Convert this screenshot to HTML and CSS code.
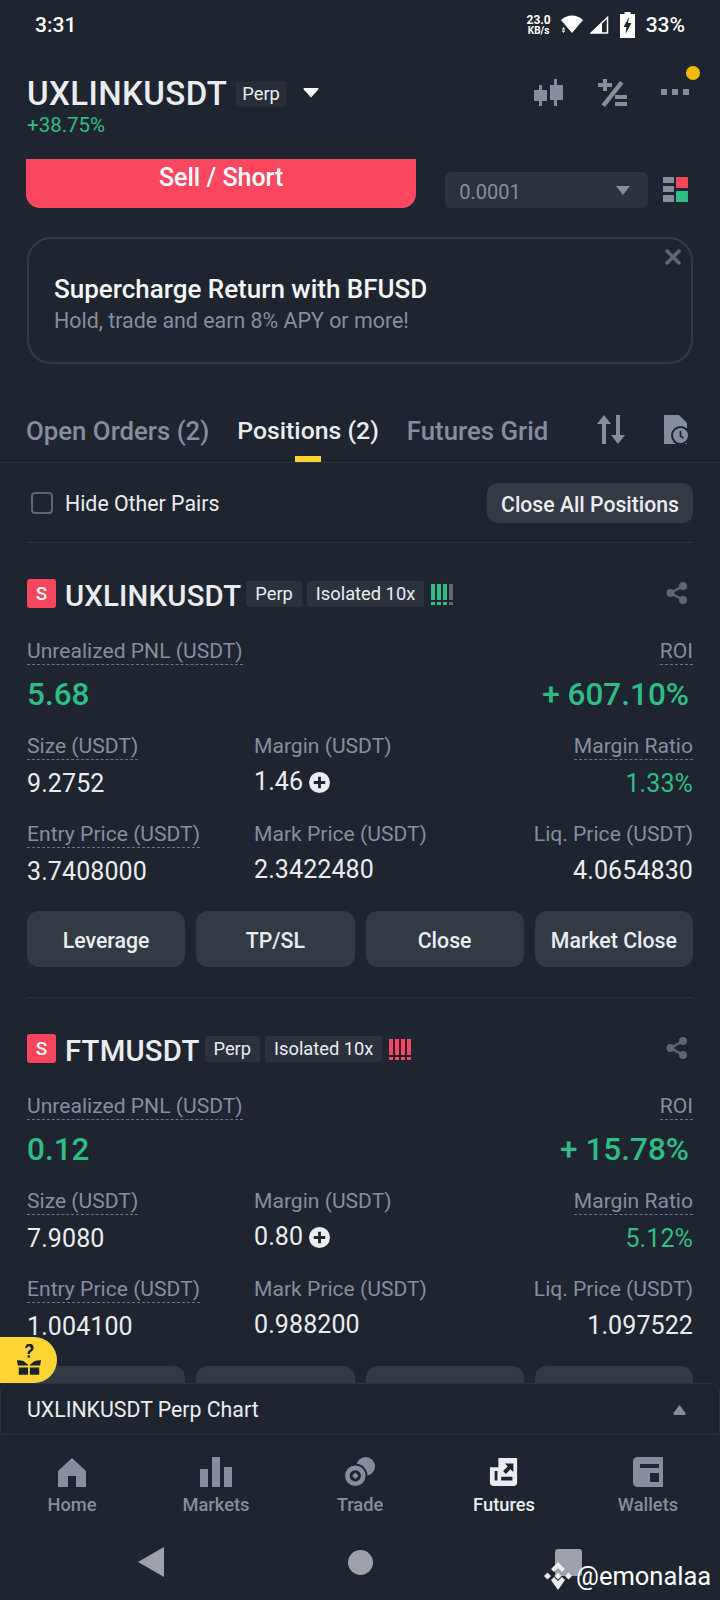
FILE: index.html
```html
<!doctype html>
<html lang="en">
<head>
  <meta charset="UTF-8" />
  <meta name="viewport" content="width=device-width, initial-scale=1.0" />
  <title>UXLINKUSDT Perp - Positions</title>
  <link rel="stylesheet" href="styles.css">
</head>
<body>
  <div class="screen">
    <div class="status-bar">
      <span class="status-time">3:31</span>
      <div class="status-right">
        <span class="net-speed"><b>23.0</b><b class="net-unit">KB/s</b></span>
        <svg class="wifi" width="22" height="20" viewBox="0 0 22 20"><path d="M0 5C6-1 16-1 22 5L11 18z" fill="#fff"/><path d="M1 13.500l3 3.500H1zM1 18h3l-1.500 2z" fill="#1e2530"/><path d="M2.500 12l1.800 2.500H.7zM.7 15.500h3.600l-1.800 2.500z" fill="#fff"/></svg>
        <svg class="signal" width="19" height="18" viewBox="0 0 19 18"><path d="M17.500 1.500V17H1z" fill="none" stroke="#fff" stroke-width="1.500"/><path d="M1 17L12 6.500V17z" fill="#fff"/></svg>
        <svg class="battery" width="15" height="26" viewBox="0 0 15 26"><path d="M4.500 0h6v2H15v24H0V2h4.500z" fill="#fff"/><path d="M9 5L3.500 15h3l-1 7 6-11H8z" fill="#1e2530"/></svg>
        <span class="status-pct">33%</span>
      </div>
    </div>

    <header class="top-bar">
      <div class="pair">
        <div class="pair-line">
          <h1>UXLINKUSDT</h1>
          <span class="tag tag-top">Perp</span>
          <svg class="pair-caret" width="16" height="11" viewBox="0 0 16 11"><path d="M1.500 1h13a1 1 0 0 1 .8 1.500L8 10.500.7 2.500A1 1 0 0 1 1.500 1z" fill="#fff"/></svg>
        </div>
        <div class="pair-change">+38.75%</div>
      </div>
      <div class="top-icons">
        <svg width="32" height="30" viewBox="0 0 32 30" fill="#848e9c"><path d="M6 7h3v5h5v11H9v5H6v-5H1V12h5z"/><path d="M21 1h3v6h6v15h-6v6h-3v-6h-4V7h4z"/></svg>
        <svg width="30" height="30" viewBox="0 0 30 30" fill="#848e9c"><path d="M5 1h4v4h5v4H9v4H5V9H0V5h5z"/><path d="M22 3l3.500 2.500L7 29l-3.500-2.500z"/><path d="M17 17h12v4H17zM17 24h12v4H17z"/></svg>
        <div class="more">
          <svg width="28" height="6" viewBox="0 0 28 6" fill="#848e9c"><path d="M0 0h6v6H0zM11 0h6v6h-6zM22 0h6v6h-6z"/></svg>
          <span class="more-dot"></span>
        </div>
      </div>
    </header>

    <div class="order-row">
      <button class="sell-btn">Sell / Short</button>
      <div class="depth-select">
        <span>0.0001</span>
        <svg width="14" height="9" viewBox="0 0 14 9"><path d="M0 0h14L7 9z" fill="#848e9c"/></svg>
      </div>
      <svg class="book-icon" width="25" height="25" viewBox="0 0 25 25"><path d="M0 0h11v6H0zM0 9h11v6H0zM0 18h11v7H0z" fill="#848e9c"/><path d="M13 0h12v11H13z" fill="#f6465d"/><path d="M13 14h12v11H13z" fill="#2ebd85"/></svg>
    </div>

    <div class="banner">
      <svg class="banner-close" width="18" height="18" viewBox="0 0 18 18"><path d="M2 2l14 14M16 2L2 16" stroke="#5e6673" stroke-width="3.500"/></svg>
      <div class="banner-title">Supercharge Return with BFUSD</div>
      <div class="banner-sub">Hold, trade and earn 8% APY or more!</div>
    </div>

    <nav class="tabs">
      <a class="tab">Open Orders (2)</a>
      <a class="tab tab-active">Positions (2)</a>
      <a class="tab">Futures Grid</a>
      <div class="tab-icons">
        <svg width="28" height="29" viewBox="0 0 28 29" fill="#848e9c"><path d="M7 0l7 9H9v20H5V9H0z"/><path d="M19 0h4v20h5l-7 9-7-9h5z"/></svg>
        <svg width="26" height="29" viewBox="0 0 26 29"><path d="M0 0h15l8 8v21H0z" fill="#848e9c"/><circle cx="16.500" cy="20.500" r="9.500" fill="#1e2530"/><circle cx="16.500" cy="20.500" r="7.500" fill="#848e9c"/><path d="M16.500 16v5l3 2" stroke="#1e2530" stroke-width="1.800" fill="none"/></svg>
      </div>
    </nav>

    <div class="filter-row">
      <label class="hide-pairs"><span class="checkbox"></span><span class="hide-text">Hide Other Pairs</span></label>
      <button class="close-all">Close All Positions</button>
    </div>

    <main class="positions">
      <section class="position">
        <div class="position-head">
          <span class="side-badge">S</span>
          <span class="position-name">UXLINKUSDT</span>
          <span class="tag">Perp</span>
          <span class="tag">Isolated 10x</span>
          <span class="risk">
            <i class="risk-green"></i><i class="risk-green"></i><i class="risk-green"></i><i class="risk-grey"></i>
          </span>
          <svg class="share" width="22" height="22" viewBox="0 0 22 22" fill="#5e6673"><circle cx="17" cy="4" r="4"/><circle cx="4.500" cy="11" r="4"/><circle cx="17" cy="18" r="4"/><path d="M4.500 11L17 4M4.500 11L17 18" stroke="#5e6673" stroke-width="2.500"/></svg>
        </div>
        <div class="pnl-row">
          <div>
            <span class="label dotted">Unrealized PNL (USDT)</span>
            <div class="pnl-value">5.68</div>
          </div>
          <div class="align-right">
            <span class="label dotted">ROI</span>
            <div class="pnl-value roi">+ 607.10%</div>
          </div>
        </div>
        <div class="stat-grid">
          <div><span class="label dotted">Size (USDT)</span><div class="value">9.2752</div></div>
          <div><span class="label">Margin (USDT)</span><div class="value">1.46 <svg class="plus" width="21" height="21" viewBox="0 0 22 22"><circle cx="11" cy="11" r="11" fill="#eaecef"/><path d="M11 5v12M5 11h12" stroke="#1e2530" stroke-width="3"/></svg></div></div>
          <div class="align-right"><span class="label dotted">Margin Ratio</span><div class="value value-green">1.33%</div></div>
          <div><span class="label dotted">Entry Price (USDT)</span><div class="value">3.7408000</div></div>
          <div><span class="label">Mark Price (USDT)</span><div class="value">2.3422480</div></div>
          <div class="align-right"><span class="label">Liq. Price (USDT)</span><div class="value">4.0654830</div></div>
        </div>
        <div class="actions">
          <button>Leverage</button>
          <button>TP/SL</button>
          <button>Close</button>
          <button>Market Close</button>
        </div>
      </section>

      <section class="position">
        <div class="position-head">
          <span class="side-badge">S</span>
          <span class="position-name">FTMUSDT</span>
          <span class="tag">Perp</span>
          <span class="tag">Isolated 10x</span>
          <span class="risk">
            <i class="risk-red"></i><i class="risk-red"></i><i class="risk-red"></i><i class="risk-red"></i>
          </span>
          <svg class="share" width="22" height="22" viewBox="0 0 22 22" fill="#5e6673"><circle cx="17" cy="4" r="4"/><circle cx="4.500" cy="11" r="4"/><circle cx="17" cy="18" r="4"/><path d="M4.500 11L17 4M4.500 11L17 18" stroke="#5e6673" stroke-width="2.500"/></svg>
        </div>
        <div class="pnl-row">
          <div>
            <span class="label dotted">Unrealized PNL (USDT)</span>
            <div class="pnl-value">0.12</div>
          </div>
          <div class="align-right">
            <span class="label dotted">ROI</span>
            <div class="pnl-value roi">+ 15.78%</div>
          </div>
        </div>
        <div class="stat-grid">
          <div><span class="label dotted">Size (USDT)</span><div class="value">7.9080</div></div>
          <div><span class="label">Margin (USDT)</span><div class="value">0.80 <svg class="plus" width="21" height="21" viewBox="0 0 22 22"><circle cx="11" cy="11" r="11" fill="#eaecef"/><path d="M11 5v12M5 11h12" stroke="#1e2530" stroke-width="3"/></svg></div></div>
          <div class="align-right"><span class="label dotted">Margin Ratio</span><div class="value value-green">5.12%</div></div>
          <div><span class="label dotted">Entry Price (USDT)</span><div class="value">1.004100</div></div>
          <div><span class="label">Mark Price (USDT)</span><div class="value">0.988200</div></div>
          <div class="align-right"><span class="label">Liq. Price (USDT)</span><div class="value">1.097522</div></div>
        </div>
        <div class="actions">
          <button></button>
          <button></button>
          <button></button>
          <button></button>
        </div>
      </section>
    </main>

    <div class="gift">
      <svg width="26" height="32" viewBox="0 0 28 34" fill="#1e2329"><path d="M10 4a4.500 4.500 0 1 1 7 3.500c-1.500 1-2 1.500-2 3h-2.500c0-2.500 1-3.500 2.500-4.500a2 2 0 1 0-3-2z"/><path d="M12.500 12h2.500v2.500h-2.500z"/><path d="M1 17l7 1 5 4v1H2zM27 17l-7 1-5 4v1h11z"/><path d="M3 25h10v8H3zM15 25h10v8H15z"/></svg>
    </div>

    <div class="chart-bar">
      <span>UXLINKUSDT Perp Chart</span>
      <svg width="13" height="10" viewBox="0 0 13 10"><path d="M6.500 0l6 8q.5 2-1 2h-10q-1.500 0-1-2z" fill="#848e9c"/></svg>
    </div>

    <nav class="tabbar">
      <a class="tabbar-item">
        <svg width="32" height="30" viewBox="0 0 32 30" fill="#848e9c"><path fill-rule="evenodd" d="M16 1l14 13v16H2V14zM12 19v11h8V19z"/></svg>
        <span>Home</span>
      </a>
      <a class="tabbar-item">
        <svg width="32" height="30" viewBox="0 0 32 30" fill="#848e9c"><path d="M0 12h8v18H0zM12 0h8v30h-8zM24 10h8v20h-8z"/></svg>
        <span>Markets</span>
      </a>
      <a class="tabbar-item">
        <svg width="30" height="30" viewBox="0 0 32 32"><circle cx="22" cy="10" r="10" fill="#848e9c"/><circle cx="11" cy="20" r="13" fill="#1e2530"/><circle cx="11" cy="20" r="11" fill="#848e9c"/><circle cx="11" cy="20" r="6" fill="#1e2530"/><path d="M11 16.500l3.500 3.500-3.500 3.500L7.500 20z" fill="#848e9c"/></svg>
        <span>Trade</span>
      </a>
      <a class="tabbar-item tabbar-active">
        <svg width="30" height="30" viewBox="0 0 30 32"><path fill="#eaecef" d="M9 1h20v26q0 4-4 4H4q-4 0-4-4V11h9z"/><path fill="#1e2530" d="M16 7h9v9l-3-3-5 5-3-3 5-5zM5 15h3v10H5zM12 21h12v4H12z"/></svg>
        <span>Futures</span>
      </a>
      <a class="tabbar-item">
        <svg width="30" height="30" viewBox="0 0 30 30"><path fill="#848e9c" d="M5 0h25v30H5q-5 0-5-5V5q0-5 5-5z"/><path fill="#1e2530" d="M7 7h19v4H7zM17 16h9v9h-9z"/></svg>
        <span>Wallets</span>
      </a>
    </nav>

    <div class="android-nav">
      <svg width="27" height="30" viewBox="0 0 27 30"><path d="M26 0v30L0 15z" fill="#9ea2a8"/></svg>
      <span class="android-home"></span>
      <span class="android-recent"></span>
    </div>

    <div class="watermark">
      <svg width="28" height="28" viewBox="0 0 28 28" fill="#eaecef"><path fill-rule="evenodd" d="M14 0l7 7-3 3-4-4-4 4-3-3zM3.500 10.500l3.500 3.500-3.500 3.500L0 14zM24.500 10.500L28 14l-3.500 3.500L21 14zM14 10.500l3.500 3.500-3.500 3.500-3.500-3.500zM7 18l3-3 4 4 4-4 3 3-7 10z"/></svg>
      <span>@emonalaa</span>
    </div>
  </div>
</body>
</html>
```

FILE: styles.css
```css
:root {
  --bg: #1e2530;
  --line: #2b323c;
  --btn: #323a45;
  --white: #eaecef;
  --grey: #848e9c;
  --green: #2ebd85;
  --red: #f6465d;
  --yellow: #fcd535;
}

* {
  box-sizing: border-box;
}

body {
  margin: 0;
  background-color: var(--bg);
  font-family: Roboto, "Noto Sans", sans-serif;
  color: var(--white);
}

button {
  font-family: inherit;
  border: none;
  color: var(--white);
}

.screen {
  position: relative;
  width: 720px;
  height: 1600px;
  overflow: hidden;
  display: flex;
  flex-direction: column;
  background-color: var(--bg);
}

/* status bar */
.status-bar {
  height: 50px;
  flex: none;
  display: flex;
  justify-content: space-between;
  align-items: center;
  padding: 0 35px;
  color: #fff;
}

.status-time {
  font-size: 21px;
  font-weight: 500;
}

.status-right {
  display: flex;
  align-items: center;
  gap: 7px;
}

.net-speed {
  display: flex;
  flex-direction: column;
  align-items: center;
  font-size: 12px;
  line-height: 11px;
  margin-right: 3px;
}

.net-unit {
  font-size: 10px;
  line-height: 10px;
}

.battery {
  margin-left: 4px;
}

.status-pct {
  font-size: 21px;
  font-weight: 500;
  margin-left: 4px;
}

/* pair header */
.top-bar {
  height: 89px;
  flex: none;
  display: flex;
  justify-content: space-between;
  padding: 27px 31px 0 27px;
}

.pair-line {
  display: flex;
  align-items: center;
  height: 34px;
}

.pair-line h1 {
  margin: 0;
  font-size: 33px;
  font-weight: 500;
  line-height: 34px;
  letter-spacing: 0.4px;
}

.pair-change {
  font-size: 20.500px;
  line-height: 24px;
  color: var(--green);
  margin-top: 2px;
}

.tag {
  flex: none;
  height: 26px;
  padding: 0 9px;
  border-radius: 3px;
  background-color: #2b323d;
  font-size: 18.300px;
  line-height: 26px;
  color: var(--white);
  margin-left: 5px;
}

.tag-top {
  margin-left: 9px;
  padding: 0 6px;
  background-color: #272e39;
}

.pair-caret {
  margin-left: 17px;
  margin-top: -4px;
}

.top-icons {
  display: flex;
  align-items: center;
  height: 34px;
  gap: 33px;
  margin-top: -1px;
}

.more {
  position: relative;
  margin-top: -2px;
  line-height: 0;
}

.more-dot {
  position: absolute;
  right: -11px;
  top: -23px;
  width: 14px;
  height: 14px;
  border-radius: 50%;
  background-color: #f0b90b;
}

/* order row */
.order-row {
  height: 49px;
  flex: none;
  display: flex;
  align-items: flex-end;
  padding: 0 32px 0 26px;
  margin-top: 20px;
}

.sell-btn {
  width: 391px;
  height: 49px;
  border-radius: 0 0 14px 14px;
  background-color: #fb4660;
  color: #fff;
  font-size: 25px;
  font-weight: 500;
  padding: 0 0 13px;
}

.depth-select {
  width: 203px;
  height: 36px;
  margin-left: 29px;
  padding: 3px 18px 0 14px;
  border-radius: 6px;
  background-color: #2b323d;
  color: var(--grey);
  font-size: 20px;
  display: flex;
  align-items: center;
  justify-content: space-between;
}

.depth-select svg {
  margin-top: -3px;
}

.book-icon {
  margin-left: 15px;
  margin-bottom: 6px;
}

/* banner */
.banner {
  position: relative;
  height: 127px;
  flex: none;
  margin: 29px 27px 0;
  padding: 34px 25px 0;
  border: 2px solid #333a45;
  border-radius: 24px;
}

.banner-close {
  position: absolute;
  right: 9px;
  top: 9px;
}

.banner-title {
  font-size: 26px;
  font-weight: 500;
  line-height: 32px;
  color: #f5f5f5;
}

.banner-sub {
  font-size: 21.400px;
  line-height: 26px;
  margin-top: 3px;
  color: var(--grey);
}

/* tabs */
.tabs {
  height: 99px;
  flex: none;
  display: flex;
  align-items: flex-start;
  padding: 50px 30px 0 26px;
  border-bottom: 1px solid var(--line);
}

.tab {
  position: relative;
  font-size: 25.800px;
  font-weight: 500;
  line-height: 34px;
  color: var(--grey);
  margin-right: 28px;
}

.tab-active {
  color: var(--white);
  font-size: 24.800px;
}

.tab-active::after {
  content: "";
  position: absolute;
  left: 50%;
  bottom: -14px;
  width: 26px;
  height: 6px;
  margin-left: -13px;
  background-color: var(--yellow);
}

.tab-icons {
  margin-left: auto;
  display: flex;
  gap: 39px;
  margin-top: 1px;
}

/* filter */
.filter-row {
  height: 80px;
  flex: none;
  margin: 0 27px;
  display: flex;
  align-items: center;
  justify-content: space-between;
  border-bottom: 1px solid var(--line);
}

.hide-pairs {
  display: flex;
  align-items: center;
  font-size: 21.300px;
  padding-left: 4px;
  line-height: 26px;
}

.hide-text {
  padding-top: 3px;
}

.checkbox {
  width: 22px;
  height: 22px;
  margin-right: 12px;
  border: 2px solid #5e6673;
  border-radius: 4px;
}

.close-all {
  height: 40px;
  width: 206px;
  padding: 3px 0 0;
  border-radius: 10px;
  background-color: var(--btn);
  font-size: 21.200px;
  font-weight: 500;
}

/* positions */
.positions {
  flex: 1;
  min-height: 0;
  overflow: hidden;
}

.position {
  height: 455px;
  margin: 0 27px;
  padding-top: 35px;
  border-bottom: 1px solid var(--line);
}

.position-head {
  display: flex;
  align-items: center;
  height: 30px;
}

.position-head .tag {
  margin-top: 2px;
}

.side-badge {
  flex: none;
  width: 29px;
  height: 29px;
  border-radius: 3px;
  background-color: var(--red);
  color: #fff;
  font-size: 19px;
  font-weight: 500;
  line-height: 29px;
  text-align: center;
}

.position-name {
  font-size: 29.300px;
  font-weight: 500;
  margin: 6px 0 0 9px;
  letter-spacing: 0.2px;
}

.share {
  margin-left: auto;
  margin-right: 5px;
}

.risk {
  display: flex;
  gap: 2px;
  margin: 2px 0 0 7px;
}

.risk i {
  display: block;
  width: 4px;
  height: 21px;
  background: linear-gradient(currentColor 16px, transparent 16px, transparent 18px, currentColor 18px);
}

.risk-green {
  color: var(--green);
}

.risk-red {
  color: var(--red);
}

.risk-grey {
  color: #5e6673;
}

.label {
  display: inline-block;
  font-size: 21.100px;
  line-height: 26px;
  color: var(--grey);
}

.dotted {
  border-bottom: 1px dashed #6a7380;
}

.pnl-row {
  display: flex;
  justify-content: space-between;
  margin-top: 30px;
}

.pnl-value {
  font-size: 31.500px;
  font-weight: 500;
  line-height: 40px;
  color: var(--green);
  margin-top: 10px;
}

.roi {
  padding-right: 4px;
}

.align-right {
  text-align: right;
}

.stat-grid {
  display: grid;
  grid-template-columns: 227px 1fr 1fr;
  grid-auto-rows: 88px;
  margin-top: 18px;
}

.value {
  font-size: 25px;
  line-height: 30px;
  letter-spacing: 0.1px;
  margin-top: 9px;
  display: flex;
  align-items: center;
  gap: 6px;
}

.stat-grid > div:nth-child(3n+2) .value {
  margin-top: 8px;
}

.align-right .value {
  justify-content: flex-end;
}

.value-green {
  color: var(--green);
}

.actions {
  display: grid;
  grid-template-columns: repeat(4, 1fr);
  gap: 11px;
  margin-top: 2px;
}

.actions button {
  height: 56px;
  padding: 2px 0 0;
  border-radius: 12px;
  background-color: var(--btn);
  font-size: 21.300px;
  font-weight: 500;
}

/* floating gift */
.gift {
  position: absolute;
  left: 0;
  top: 1337px;
  width: 57px;
  height: 46px;
  border-radius: 0 23px 23px 0;
  background-color: var(--yellow);
  display: flex;
  align-items: center;
  justify-content: center;
}

/* chart drawer */
.chart-bar {
  height: 52px;
  flex: none;
  display: flex;
  align-items: center;
  justify-content: space-between;
  padding: 1px 33px 0 26px;
  border: 1px solid var(--line);
  border-radius: 8px 8px 0 0;
  background-color: var(--bg);
  font-size: 21.300px;
}

/* bottom nav */
.tabbar {
  height: 85px;
  flex: none;
  display: grid;
  grid-template-columns: repeat(5, 144px);
  padding-top: 22px;
}

.tabbar-item {
  display: flex;
  flex-direction: column;
  align-items: center;
  font-size: 18.300px;
  font-weight: 500;
  color: var(--grey);
}

.tabbar-item span {
  margin-top: 7px;
}

.tabbar-active {
  color: var(--white);
}

/* android nav */
.android-nav {
  height: 80px;
  flex: none;
  display: flex;
  justify-content: space-between;
  align-items: center;
  padding: 4px 138px 0;
}

.android-home {
  width: 25px;
  height: 25px;
  border-radius: 50%;
  background-color: #9ea2a8;
}

.android-recent {
  width: 27px;
  height: 27px;
  border-radius: 3px;
  background-color: #9ea2a8;
}

.watermark {
  position: absolute;
  left: 544px;
  top: 1561px;
  display: flex;
  align-items: center;
  gap: 4px;
  color: #fff;
  font-size: 25.500px;
  line-height: 30px;
}
```
